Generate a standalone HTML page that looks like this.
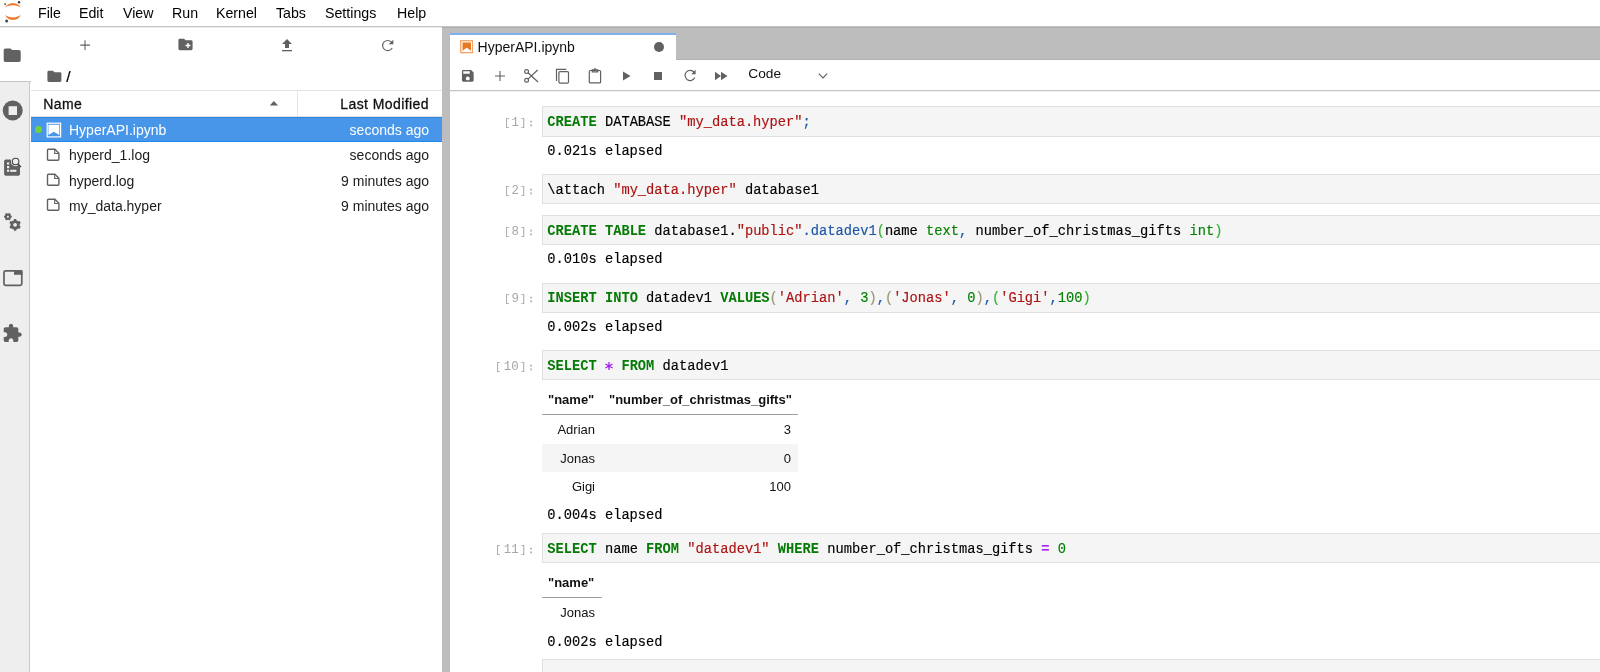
<!DOCTYPE html>
<html><head><meta charset="utf-8">
<style>
*{box-sizing:border-box;margin:0;padding:0}
html,body{width:1600px;height:672px;overflow:hidden;background:#fff;font-family:"Liberation Sans",sans-serif;color:#000}
.abs{position:absolute}
#menubar{left:0;top:0;width:1600px;height:27px;background:#fff;border-bottom:1px solid #c4c4c4}
.mi{position:absolute;top:6px;font-size:14.2px;line-height:14.2px;color:#000;white-space:nowrap}
#iconbar{left:0;top:27px;width:30px;height:645px;background:#eee;border-right:1px solid #c9c9c9}
#iconact{left:0;top:27px;width:31px;height:55px;background:#fff;border-bottom:1px solid #c4c4c4}
#fb{left:31px;top:27px;width:411px;height:645px;background:#fff}
#splitter{left:442px;top:27px;width:8px;height:645px;background:#bdbdbd}
#tabbar{left:450px;top:27px;width:1150px;height:33px;background:#bdbdbd;border-bottom:1px solid #b3b3b3}
#tab{left:450px;top:33px;width:226px;height:27px;background:#fff;border-top:2px solid #7fb0ee}
#nbtool{left:450px;top:60px;width:1150px;height:31px;background:#fff;border-bottom:1px solid #c4c4c4}
#nb{left:450px;top:91px;width:1150px;height:581px;background:#fff}
.txt{position:absolute;white-space:nowrap}
.hdr{font-size:14px;line-height:14px;color:#111;-webkit-text-stroke:0.3px #111;letter-spacing:0.42px}
.fr{font-size:14px;line-height:14px;color:#1c1c1c;}
.mono{font-family:"Liberation Mono",monospace;font-size:13.73px;-webkit-text-stroke:0.15px currentColor;white-space:pre}
.cellin{position:absolute;left:542px;width:1070px;height:30px;background:#f5f5f5;border:1px solid #e0e0e0}
.prompt{position:absolute;color:#a6a6a6;font-family:"Liberation Mono",monospace;font-size:13.73px;text-align:right;right:1064.5px;white-space:pre}
.pb{display:inline-block;transform:translateY(1px) scale(0.77)}
.pd{display:inline-block;transform:translateY(0.45px) scale(0.9)}
.pc{display:inline-block;transform:translateY(0.7px) scale(0.7);-webkit-text-stroke:0.45px #a6a6a6}
.k{color:#057a05;font-weight:bold;-webkit-text-stroke:0}
.s{color:#ad1212}
.p{color:#997}
.c{color:#1a55a8}
.n{color:#008000}
.o{color:#aa22ff}
.mb{color:#2fb52f}
</style></head>
<body><div id="root" style="position:absolute;left:0;top:0;width:1600px;height:672px;overflow:hidden;will-change:transform">
<!-- menu bar -->
<div id="menubar" class="abs"></div>
<svg class="abs" style="left:0;top:0" width="26" height="26" viewBox="0 0 26 26">
  <path d="M5 8.1C7 1.5 18.9 1.5 20.9 8.1C18.9 4.3 7 4.3 5 8.1Z" fill="#ee7624"/>
  <path d="M5 14.3C7 21.9 18.9 21.9 20.9 14.3C18.9 18.5 7 18.5 5 14.3Z" fill="#ee7624"/>
  <circle cx="5.2" cy="4.1" r="0.9" fill="#3c3c3c"/>
  <circle cx="19" cy="2.3" r="1.2" fill="#3c3c3c"/>
  <circle cx="6.6" cy="21.1" r="1.5" fill="#4a4a4a"/>
</svg>
<div class="mi" style="left:38px">File</div>
<div class="mi" style="left:79px">Edit</div>
<div class="mi" style="left:123px">View</div>
<div class="mi" style="left:172px">Run</div>
<div class="mi" style="left:216px">Kernel</div>
<div class="mi" style="left:276px">Tabs</div>
<div class="mi" style="left:325px">Settings</div>
<div class="mi" style="left:397px">Help</div>

<!-- left icon bar -->
<div id="iconbar" class="abs"></div>
<div id="iconact" class="abs"></div>

<!-- file browser -->
<div id="fb" class="abs"></div>


<!-- sidebar icons -->
<svg class="abs" style="left:2.3px;top:44.6px" width="20.4" height="20.4" viewBox="0 0 24 24"><path fill="#616161" d="M10 4H4c-1.1 0-1.99.9-1.99 2L2 18c0 1.1.9 2 2 2h16c1.1 0 2-.9 2-2V8c0-1.1-.9-2-2-2h-8l-2-2z"/></svg>
<svg class="abs" style="left:0;top:95px" width="30" height="30" viewBox="0 0 30 30"><circle cx="12.7" cy="15.5" r="10" fill="#616161"/><rect x="8.6" y="11.2" width="8.4" height="8.8" fill="#eee"/></svg>
<svg class="abs" style="left:0;top:150px" width="30" height="30" viewBox="0 0 30 30">
 <path fill="#616161" d="M5.4 9.4h5.2l1.2 1.6v4h7.2l1 1v8.4l-1.3 1.4H5.4l-1.3-1.3V10.7z"/>
 <rect x="7" y="12.4" width="2.2" height="2.2" fill="#eee"/><rect x="7" y="16" width="2.2" height="2.2" fill="#eee"/><rect x="7" y="19.6" width="2.2" height="2.2" fill="#eee"/>
 <rect x="10.2" y="19.8" width="6.2" height="2" fill="#eee"/>
 <circle cx="15.6" cy="11.5" r="3.4" fill="none" stroke="#eee" stroke-width="2.6"/>
 <circle cx="15.6" cy="11.5" r="3.3" fill="#eee" stroke="#444" stroke-width="1.1"/>
 <path d="M18 14l3 3" stroke="#444" stroke-width="1.3"/>
</svg>
<svg class="abs" style="left:0;top:205px" width="30" height="30" viewBox="0 0 30 30"><circle cx="7.9" cy="11.7" r="3.1" fill="#616161"/><rect x="4.0" y="10.85" width="7.8" height="1.7" rx="0.3" fill="#616161" transform="rotate(0 7.9 11.7)"/><rect x="4.0" y="10.85" width="7.8" height="1.7" rx="0.3" fill="#616161" transform="rotate(60 7.9 11.7)"/><rect x="4.0" y="10.85" width="7.8" height="1.7" rx="0.3" fill="#616161" transform="rotate(120 7.9 11.7)"/><circle cx="7.9" cy="11.7" r="1.0" fill="#eee"/><circle cx="15.1" cy="19.85" r="4.7" fill="#616161"/><rect x="9.2" y="18.6" width="11.8" height="2.5" rx="0.3" fill="#616161" transform="rotate(90 15.1 19.85)"/><rect x="9.2" y="18.6" width="11.8" height="2.5" rx="0.3" fill="#616161" transform="rotate(30 15.1 19.85)"/><rect x="9.2" y="18.6" width="11.8" height="2.5" rx="0.3" fill="#616161" transform="rotate(150 15.1 19.85)"/><circle cx="15.1" cy="19.85" r="1.9" fill="#eee"/></svg>
<svg class="abs" style="left:0;top:262px" width="30" height="30" viewBox="0 0 30 30"><rect x="4" y="8.8" width="17.8" height="14.6" rx="1.6" fill="none" stroke="#616161" stroke-width="1.7"/><rect x="14" y="8.2" width="8.5" height="4.6" fill="#616161"/></svg>
<svg class="abs" style="left:2.3px;top:323.4px" width="20.6" height="20.6" viewBox="0 0 24 24"><path fill="#616161" d="M20.5 11H19V7c0-1.1-.9-2-2-2h-4V3.5C13 2.12 11.88 1 10.5 1S8 2.12 8 3.5V5H4c-1.1 0-1.99.9-1.99 2v3.8H3.5c1.49 0 2.7 1.21 2.7 2.7s-1.21 2.7-2.7 2.7H2V20c0 1.1.9 2 2 2h3.8v-1.5c0-1.49 1.21-2.7 2.7-2.7 1.49 0 2.7 1.21 2.7 2.7V22H17c1.1 0 2-.9 2-2v-4h1.5c1.38 0 2.5-1.12 2.5-2.5S21.88 11 20.5 11z"/></svg>

<!-- file browser toolbar -->
<svg class="abs" style="left:75px;top:35px" width="20" height="20" viewBox="0 0 20 20"><path d="M10 5.3v9.8M5.2 10.1h9.8" stroke="#616161" stroke-width="1.1"/></svg>
<svg class="abs" style="left:177.3px;top:36.4px" width="17" height="17" viewBox="0 0 24 24"><path fill="#616161" d="M10 4H4c-1.1 0-1.99.9-1.99 2L2 18c0 1.1.9 2 2 2h16c1.1 0 2-.9 2-2V8c0-1.1-.9-2-2-2h-8l-2-2z"/><path d="M15.5 10v7M12 13.5h7" stroke="#fff" stroke-width="2"/></svg>
<svg class="abs" style="left:278px;top:37px" width="18" height="16" viewBox="0 0 18 16"><path fill="#616161" d="M9 2l-5 5h3v4h4V7h3z"/><rect x="4" y="13" width="10" height="1.3" fill="#616161"/></svg>
<svg class="abs" style="left:377px;top:35px" width="20" height="20" viewBox="0 0 20 20"><path d="M14.8 7.5A5.1 5.1 0 1 0 15.2 13" fill="none" stroke="#616161" stroke-width="1.15"/><path fill="#616161" d="M16.3 4.7v4.6h-4.6z"/></svg>

<!-- breadcrumbs -->
<svg class="abs" style="left:46.1px;top:68.1px" width="16.8" height="16.8" viewBox="0 0 24 24"><path fill="#616161" d="M10 4H4c-1.1 0-1.99.9-1.99 2L2 18c0 1.1.9 2 2 2h16c1.1 0 2-.9 2-2V8c0-1.1-.9-2-2-2h-8l-2-2z"/></svg>
<div class="txt" style="left:66.2px;top:69.3px;font-size:15.5px;line-height:15.5px;-webkit-text-stroke:0.2px #000">/</div>
<div class="abs" style="left:31px;top:89.6px;width:411px;height:1.4px;background:#e2e2e2"></div>

<!-- listing header -->
<div class="txt hdr" style="left:43.2px;top:96.6px">Name</div>
<svg class="abs" style="left:268px;top:99px" width="12" height="8" viewBox="0 0 12 8"><path d="M1.7 6.5L5.9 2 10.1 6.5z" fill="#616161"/></svg>
<div class="abs" style="left:297px;top:91px;width:1px;height:25px;background:#e6e6e6"></div>
<div class="txt hdr" style="right:1171px;top:96.6px">Last Modified</div>
<div class="abs" style="left:31px;top:116px;width:411px;height:1px;background:#e0e0e0"></div>

<!-- rows -->
<div class="abs" style="left:31px;top:116.5px;width:411px;height:25.5px;background:#4896ea;border-top:1px solid #2f86da;border-bottom:1px solid #1a8aef"></div>
<div class="abs" style="left:35.4px;top:126px;width:7px;height:7px;border-radius:50%;background:#71d03e"></div>
<svg class="abs" style="left:46px;top:121.7px" width="16" height="16" viewBox="0 0 16 16"><rect x="1.2" y="1.2" width="13.4" height="13.7" fill="none" stroke="#fff" stroke-width="1.2"/><path d="M2.4 2.7h10.9v10.3l-5.45-3.2-5.45 3.2z" fill="#fff"/></svg>
<div class="txt fr" style="left:69px;top:123.3px;color:#fff">HyperAPI.ipynb</div>
<div class="txt fr" style="right:1171px;top:123.3px;color:#fff">seconds ago</div>

<svg class="abs" style="left:46.2px;top:147.9px" width="15" height="15" viewBox="0 0 15 15"><path d="M1.5 2.2q0-1 1-1h6.4l4 4v6.1q0 1-1 1H2.5q-1 0-1-1z" fill="none" stroke="#616161" stroke-width="1.4"/><path d="M8.7 1.6v3.9h3.9" fill="none" stroke="#616161" stroke-width="1.1"/></svg>
<div class="txt fr" style="left:69px;top:148.3px">hyperd_1.log</div>
<div class="txt fr" style="right:1171px;top:148.3px">seconds ago</div>

<svg class="abs" style="left:46.2px;top:173.1px" width="15" height="15" viewBox="0 0 15 15"><path d="M1.5 2.2q0-1 1-1h6.4l4 4v6.1q0 1-1 1H2.5q-1 0-1-1z" fill="none" stroke="#616161" stroke-width="1.4"/><path d="M8.7 1.6v3.9h3.9" fill="none" stroke="#616161" stroke-width="1.1"/></svg>
<div class="txt fr" style="left:69px;top:173.5px">hyperd.log</div>
<div class="txt fr" style="right:1171px;top:173.5px">9 minutes ago</div>

<svg class="abs" style="left:46.2px;top:198px" width="15" height="15" viewBox="0 0 15 15"><path d="M1.5 2.2q0-1 1-1h6.4l4 4v6.1q0 1-1 1H2.5q-1 0-1-1z" fill="none" stroke="#616161" stroke-width="1.4"/><path d="M8.7 1.6v3.9h3.9" fill="none" stroke="#616161" stroke-width="1.1"/></svg>
<div class="txt fr" style="left:69px;top:198.5px">my_data.hyper</div>
<div class="txt fr" style="right:1171px;top:198.5px">9 minutes ago</div>

<div id="splitter" class="abs"></div>
<div id="tabbar" class="abs"></div>
<div id="tab" class="abs"></div>
<div id="nbtool" class="abs"></div>
<div id="nb" class="abs"></div>

<!-- tab -->
<svg class="abs" style="left:459.5px;top:40px" width="13.5" height="13.5" viewBox="0 0 16 16"><rect x="0.9" y="0.9" width="14.2" height="14.2" fill="none" stroke="#ef8a3a" stroke-width="1.2"/><path d="M3 3h10v9.6l-5-3.3-5 3.3z" fill="#e87722"/></svg>
<div class="txt" style="left:477.6px;top:40.2px;font-size:14px;line-height:14px;color:#111">HyperAPI.ipynb</div>
<div class="abs" style="left:653.8px;top:42.4px;width:9.8px;height:9.8px;border-radius:50%;background:#616161"></div>

<!-- notebook toolbar -->
<svg class="abs" style="left:460.2px;top:68.2px" width="15.6" height="15.6" viewBox="0 0 24 24"><path fill="#616161" d="M17 3H5c-1.11 0-2 .9-2 2v14c0 1.1.89 2 2 2h14c1.1 0 2-.9 2-2V7l-4-4zm-5 16c-1.66 0-3-1.34-3-3s1.34-3 3-3 3 1.34 3 3-1.34 3-3 3zm3-10H5V5h10v4z"/></svg>
<svg class="abs" style="left:489.7px;top:65.6px" width="20" height="20" viewBox="0 0 20 20"><path d="M10 5v10M5 10h10" stroke="#616161" stroke-width="1.1"/></svg>
<svg class="abs" style="left:521px;top:66px" width="20" height="20" viewBox="0 0 20 20"><circle cx="5.6" cy="5.6" r="1.9" fill="none" stroke="#616161" stroke-width="1.2"/><circle cx="5.6" cy="14.3" r="1.9" fill="none" stroke="#616161" stroke-width="1.2"/><path d="M7 6.8L17 16M7 13.1L16.6 4" stroke="#616161" stroke-width="1.2"/></svg>
<svg class="abs" style="left:553px;top:65.5px" width="20" height="20" viewBox="0 0 20 20"><path d="M3.5 15V3.3h9.8" fill="none" stroke="#616161" stroke-width="1.2"/><rect x="5.9" y="5.7" width="9.6" height="11.4" rx="1" fill="none" stroke="#616161" stroke-width="1.2"/></svg>
<svg class="abs" style="left:584.5px;top:65.5px" width="20" height="20" viewBox="0 0 20 20"><rect x="4.3" y="4.5" width="11.3" height="12.4" rx="1" fill="none" stroke="#616161" stroke-width="1.2"/><path d="M7.2 3.9h5.6v2H7.2z" fill="none" stroke="#616161" stroke-width="1.1"/><circle cx="10" cy="3" r="0.9" fill="#616161"/></svg>
<svg class="abs" style="left:617px;top:66px" width="20" height="20" viewBox="0 0 20 20"><path d="M6 5.5L13.6 10 6 14.5z" fill="#616161"/></svg>
<div class="abs" style="left:653.5px;top:71.8px;width:8.8px;height:8.2px;background:#616161"></div>
<svg class="abs" style="left:679.6px;top:64.9px" width="20" height="20" viewBox="0 0 20 20"><path d="M14.2 7.3A5.1 5.1 0 1 0 14.8 12.6" fill="none" stroke="#616161" stroke-width="1.15"/><path fill="#616161" d="M15.6 4.8v4.4h-4.4z"/></svg>
<svg class="abs" style="left:711px;top:66px" width="20" height="20" viewBox="0 0 20 20"><path d="M4 5.8L10 10 4 14.2zM10 5.8L16.5 10 10 14.2z" fill="#616161"/></svg>
<div class="txt" style="left:748.3px;top:67.2px;font-size:13.7px;line-height:13.7px;color:#111">Code</div>
<svg class="abs" style="left:814px;top:65.6px" width="18" height="18" viewBox="0 0 18 18"><path d="M4.8 7.6L9 11.8 13.2 7.6" fill="none" stroke="#616161" stroke-width="1.2"/></svg>


<!-- cells -->
<div class="cellin" style="top:106px;height:31px"></div>
<div class="prompt" style="top:116.48px;line-height:13.73px"><span class="pb">[</span><span class="pd">1</span><span class="pb">]</span><span class="pc">:</span></div>
<div class="txt mono" style="left:547.3px;top:116.48px;line-height:13.73px"><span class="k">CREATE</span> DATABASE <span class="s">"my_data.hyper"</span><span class="c">;</span></div>
<div class="txt mono" style="left:547.3px;top:145.18px;line-height:13.73px">0.021s elapsed</div>
<div class="cellin" style="top:174px"></div>
<div class="prompt" style="top:184.48px;line-height:13.73px"><span class="pb">[</span><span class="pd">2</span><span class="pb">]</span><span class="pc">:</span></div>
<div class="txt mono" style="left:547.3px;top:184.48px;line-height:13.73px">\attach <span class="s">"my_data.hyper"</span> database1</div>
<div class="cellin" style="top:215.1px"></div>
<div class="prompt" style="top:225.38px;line-height:13.73px"><span class="pb">[</span><span class="pd">8</span><span class="pb">]</span><span class="pc">:</span></div>
<div class="txt mono" style="left:547.3px;top:225.38px;line-height:13.73px"><span class="k">CREATE</span> <span class="k">TABLE</span> database1.<span class="s">"public"</span><span class="c">.datadev1</span><span class="mb">(</span>name <span class="n">text</span><span class="c">,</span> number_of_christmas_gifts <span class="n">int</span><span class="mb">)</span></div>
<div class="txt mono" style="left:547.3px;top:252.88px;line-height:13.73px">0.010s elapsed</div>
<div class="cellin" style="top:282.5px"></div>
<div class="prompt" style="top:292px;line-height:13.73px"><span class="pb">[</span><span class="pd">9</span><span class="pb">]</span><span class="pc">:</span></div>
<div class="txt mono" style="left:547.3px;top:292px;line-height:13.73px"><span class="k">INSERT</span> <span class="k">INTO</span> datadev1 <span class="k">VALUES</span><span class="p">(</span><span class="s">'Adrian'</span><span class="c">,</span> <span class="n">3</span><span class="p">)</span><span class="c">,</span><span class="p">(</span><span class="s">'Jonas'</span><span class="c">,</span> <span class="n">0</span><span class="p">)</span><span class="c">,</span><span class="mb">(</span><span class="s">'Gigi'</span><span class="c">,</span><span class="n">100</span><span class="mb">)</span></div>
<div class="txt mono" style="left:547.3px;top:320.58px;line-height:13.73px">0.002s elapsed</div>
<div class="cellin" style="top:350.1px"></div>
<svg class="abs" style="left:603px;top:359.6px" width="12" height="12" viewBox="0 0 12 12"><path d="M6 1.9v8.2M2.45 3.95l7.1 4.1M2.45 8.05l7.1-4.1" stroke="#a020f0" stroke-width="1.3"/></svg>
<div class="prompt" style="top:360px;line-height:13.73px"><span class="pb">[</span><span class="pd">10</span><span class="pb">]</span><span class="pc">:</span></div>
<div class="txt mono" style="left:547.3px;top:360px;line-height:13.73px"><span class="k">SELECT</span>   <span class="k">FROM</span> datadev1</div>

<div class="txt" style="left:548px;top:393.1px;font-size:13px;line-height:13px;font-weight:bold;color:#111">"name"</div>
<div class="txt" style="left:609px;top:393.1px;font-size:13px;line-height:13px;font-weight:bold;color:#111">"number_of_christmas_gifts"</div>
<div class="abs" style="left:542px;top:414px;width:256px;height:1px;background:#9e9e9e"></div>
<div class="abs" style="left:542px;top:443.6px;width:256px;height:28px;background:#f5f5f5"></div>
<div class="txt" style="right:1005px;top:423px;font-size:13px;line-height:13px;color:#111">Adrian</div>
<div class="txt" style="right:809px;top:423px;font-size:13px;line-height:13px;color:#111">3</div>
<div class="txt" style="right:1005px;top:451.6px;font-size:13px;line-height:13px;color:#111">Jonas</div>
<div class="txt" style="right:809px;top:451.6px;font-size:13px;line-height:13px;color:#111">0</div>
<div class="txt" style="right:1005px;top:480px;font-size:13px;line-height:13px;color:#111">Gigi</div>
<div class="txt" style="right:809px;top:480px;font-size:13px;line-height:13px;color:#111">100</div>
<div class="txt mono" style="left:547.3px;top:508.78px;line-height:13.73px">0.004s elapsed</div>
<div class="cellin" style="top:533.1px"></div>
<div class="prompt" style="top:543.48px;line-height:13.73px"><span class="pb">[</span><span class="pd">11</span><span class="pb">]</span><span class="pc">:</span></div>
<div class="txt mono" style="left:547.3px;top:543.48px;line-height:13.73px"><span class="k">SELECT</span> name <span class="k">FROM</span> <span class="s">"datadev1"</span> <span class="k">WHERE</span> number_of_christmas_gifts <span class="o" style="font-weight:bold">=</span> <span class="n">0</span></div>

<div class="txt" style="left:548px;top:576.4px;font-size:13px;line-height:13px;font-weight:bold;color:#111">"name"</div>
<div class="abs" style="left:542px;top:597px;width:60px;height:1px;background:#9e9e9e"></div>
<div class="txt" style="right:1005px;top:605.8px;font-size:13px;line-height:13px;color:#111">Jonas</div>
<div class="txt mono" style="left:547.3px;top:636px;line-height:13.73px">0.002s elapsed</div>
<div class="cellin" style="top:659.3px"></div>
<div class="prompt" style="top:670.18px;line-height:13.73px"><span class="pb">[</span><span class="pd"> </span><span class="pb">]</span><span class="pc">:</span></div>
<div class="txt mono" style="left:547.3px;top:669.48px;line-height:13.73px"></div>
<div class="abs" style="left:0;top:27px;width:1600px;height:1px;background:rgba(0,0,0,0.07)"></div>
<div class="abs" style="left:450px;top:91px;width:1150px;height:1px;background:rgba(0,0,0,0.06)"></div>
</div></body></html>
